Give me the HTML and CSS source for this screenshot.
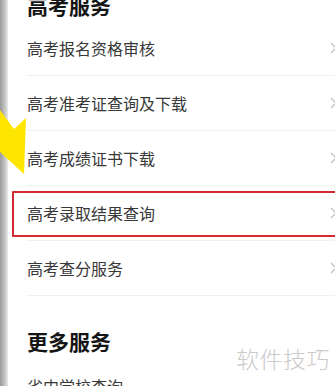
FILE: index.html
```html
<!DOCTYPE html>
<html lang="zh">
<head>
<meta charset="utf-8">
<link rel="stylesheet" href="styles.css">
</head>
<body>
<div class="page">
  <div class="edge"></div>
  <main class="content">
    <h2 class="section-title first">高考服务</h2>
    <ul class="list">
      <li class="row"><span>高考报名资格审核</span><svg class="chev" width="8" height="12" viewBox="0 0 8 12"><polyline points="1,1 6,6 1,11" fill="none" stroke="#c4c4c4" stroke-width="1.3"/></svg></li>
      <li class="row"><span>高考准考证查询及下载</span><svg class="chev" width="8" height="12" viewBox="0 0 8 12"><polyline points="1,1 6,6 1,11" fill="none" stroke="#c4c4c4" stroke-width="1.3"/></svg></li>
      <li class="row"><span>高考成绩证书下载</span><svg class="chev" width="8" height="12" viewBox="0 0 8 12"><polyline points="1,1 6,6 1,11" fill="none" stroke="#c4c4c4" stroke-width="1.3"/></svg></li>
      <li class="row"><span>高考录取结果查询</span><svg class="chev" width="8" height="12" viewBox="0 0 8 12"><polyline points="1,1 6,6 1,11" fill="none" stroke="#c4c4c4" stroke-width="1.3"/></svg><div class="highlight"></div></li>
      <li class="row"><span>高考查分服务</span><svg class="chev" width="8" height="12" viewBox="0 0 8 12"><polyline points="1,1 6,6 1,11" fill="none" stroke="#c4c4c4" stroke-width="1.3"/></svg></li>
    </ul>
    <h2 class="section-title second">更多服务</h2>
    <ul class="list">
      <li class="row"><span>省内学校查询</span></li>
    </ul>
  </main>
  <svg class="arrow" width="30" height="80" viewBox="0 0 30 80"><polygon points="0,15 14,34 26,23 24,79 0,57" fill="#ffe600"/></svg>
  <div class="watermark">软件技巧</div>
</div>
</body>
</html>
```
FILE: styles.css
```css
html, body {
  margin: 0;
  padding: 0;
  background: #fff;
}
body {
  width: 335px;
  height: 386px;
  overflow: hidden;
  font-family: "Noto Sans CJK SC", "Noto Sans", sans-serif;
}
.page {
  position: relative;
  display: flex;
  height: 386px;
  overflow: hidden;
}
.edge {
  flex: 0 0 8px;
  background: linear-gradient(to right, #9a9a9a 0%, #b4b4b4 40%, #d6d6d6 80%, #ececec 100%);
}
.content {
  flex: 1;
  padding-left: 19px;
}
.section-title {
  margin: 0;
  font-size: 21px;
  line-height: 22px;
  font-weight: 700;
  color: #151515;
}
.section-title.first {
  margin-top: -6px;
  padding-bottom: 5px;
}
.section-title.second {
  padding-top: 34px;
  padding-bottom: 7px;
}
.list {
  list-style: none;
  margin: 0;
  padding: 0;
}
.row {
  position: relative;
  display: flex;
  align-items: center;
  justify-content: space-between;
  height: 54px;
  border-bottom: 1px solid #f1f1f1;
  font-size: 16px;
  color: #383838;
}
.chev {
  margin-right: -3px;
  flex: 0 0 auto;
}
.highlight {
  position: absolute;
  left: -15px;
  right: -10px;
  top: 5px;
  height: 42px;
  border: 2px solid #d42a32;
  border-radius: 1px;
}
.arrow {
  position: absolute;
  left: 0;
  top: 95px;
}
.watermark {
  position: absolute;
  left: 236px;
  top: 343px;
  font-size: 23px;
  line-height: 30px;
  font-weight: 300;
  color: #cacaca;
  letter-spacing: 0.5px;
}
```
